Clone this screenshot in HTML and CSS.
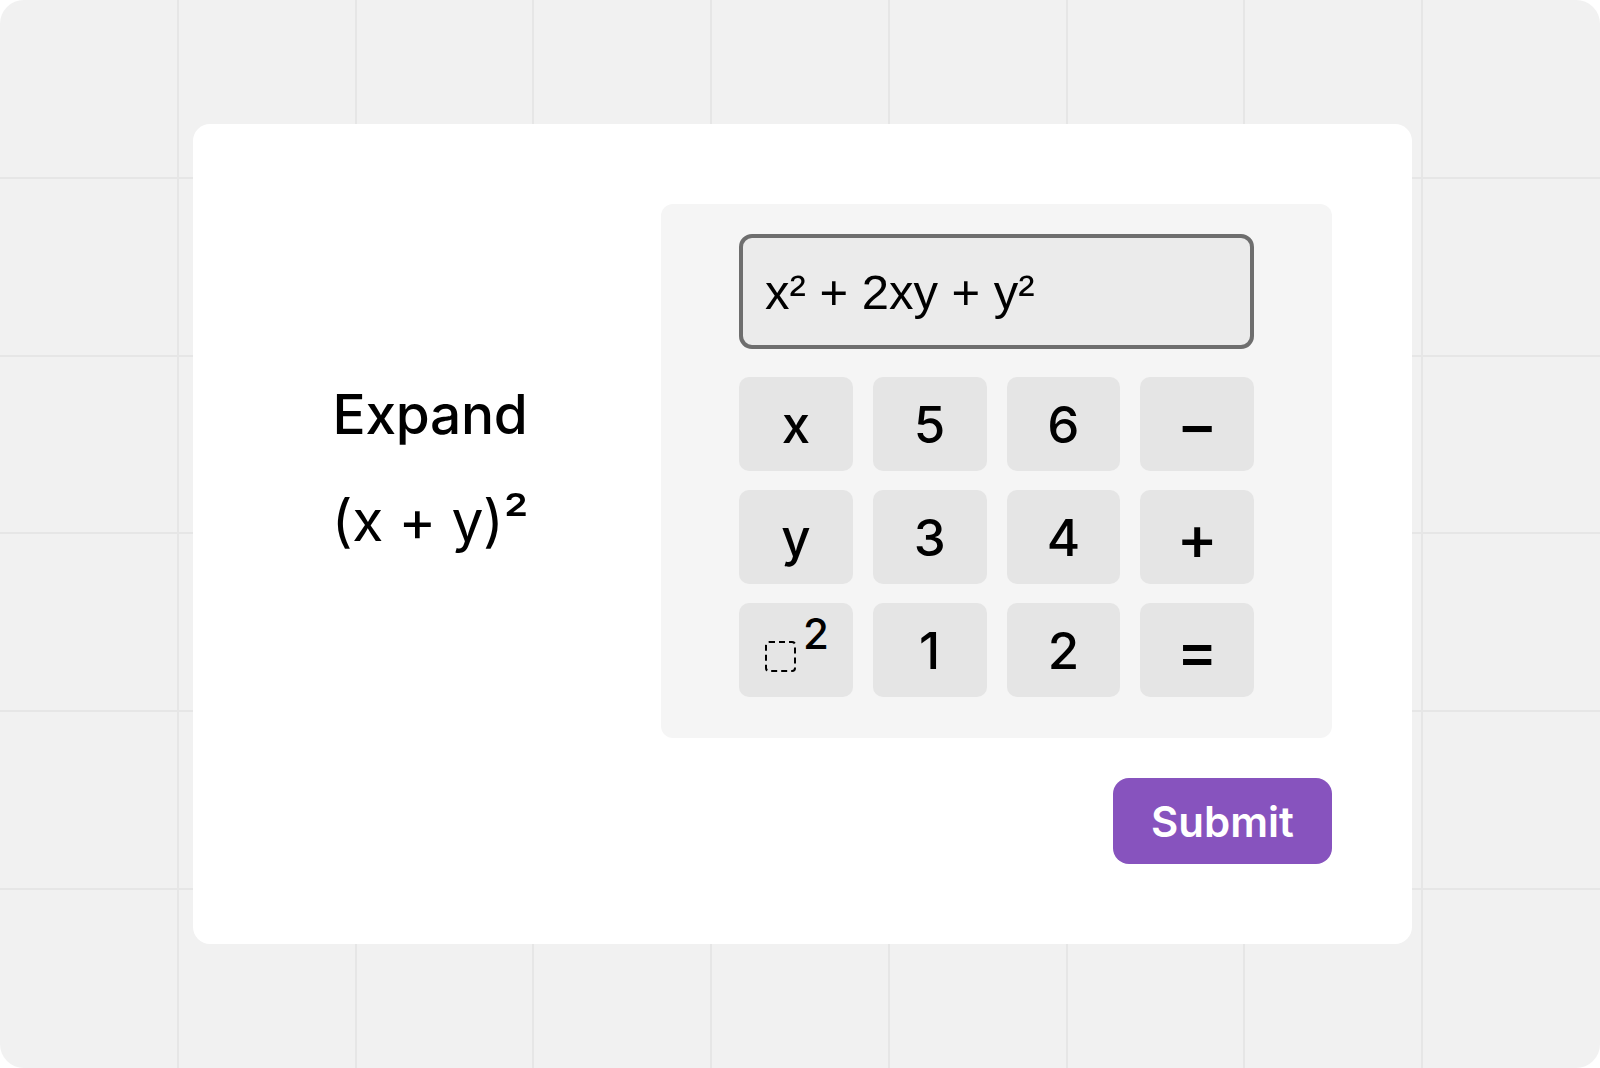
FILE: index.html
```html
<!DOCTYPE html>
<html lang="en">
<head>
<meta charset="utf-8">
<title>Expand (x + y)²</title>
<link rel="stylesheet" href="styles.css">
</head>
<body>
<div class="page">
  <div class="card">
    <div class="main">
      <div class="prompt">
        <p class="prompt-title">Expand</p>
        <p class="prompt-expr">(x + y)²</p>
      </div>
      <div class="panel">
        <div class="answer">x² + 2xy + y²</div>
        <div class="keys">
          <div class="key">x</div>
          <div class="key">5</div>
          <div class="key">6</div>
          <div class="key key-op">−</div>
          <div class="key">y</div>
          <div class="key">3</div>
          <div class="key">4</div>
          <div class="key key-op">+</div>
          <div class="key key-square"><span class="slot"></span><span class="exp">2</span></div>
          <div class="key">1</div>
          <div class="key">2</div>
          <div class="key key-op">=</div>
        </div>
      </div>
    </div>
    <div class="actions">
      <button class="submit">Submit</button>
    </div>
  </div>
</div>
</body>
</html>
```

FILE: styles.css
```css
html, body {
  margin: 0;
  padding: 0;
  background: #ffffff;
}

.page {
  width: 1600px;
  height: 1068px;
  border-radius: 24px;
  overflow: hidden;
  background-color: #f1f1f1;
  background-image:
    repeating-linear-gradient(to right, transparent 0 175.78px, #e6e6e6 175.78px 177.78px),
    repeating-linear-gradient(to bottom, transparent 0 175.78px, #e6e6e6 175.78px 177.78px);
  background-size: 1597px 100%, 100% 1062px;
  background-repeat: no-repeat, no-repeat;
  background-position: 1px 0, 0 1px;
  padding-top: 124px;
  padding-left: 193px;
  box-sizing: border-box;
}

.card {
  width: 1219px;
  height: 820px;
  box-sizing: border-box;
  padding: 80px;
  background: #ffffff;
  border-radius: 17px;
  display: flex;
  flex-direction: column;
}

.main {
  display: flex;
  align-items: center;
}

.prompt {
  width: 314px;
  margin-right: auto;
  text-align: center;
  font-family: "Inter", "Noto Sans", sans-serif;
  color: #000;
}

.prompt p {
  margin: 0;
}

.prompt-title {
  font-size: 55px;
  font-weight: 500;
  line-height: 60px;
  letter-spacing: -0.3px;
  margin-top: -4px !important;
}

.prompt-expr {
  font-size: 57px;
  font-weight: 400;
  line-height: 66px;
  letter-spacing: -0.4px;
  margin-top: 44px !important;
}

.panel {
  width: 671px;
  height: 534px;
  box-sizing: border-box;
  background: #f5f5f5;
  border-radius: 12px;
  padding: 30px 78px 41px;
  display: flex;
  flex-direction: column;
}

.answer {
  height: 115px;
  box-sizing: border-box;
  border: 4px solid #6e6e6e;
  border-radius: 13px;
  background: #ebebeb;
  padding-left: 22px;
  display: flex;
  align-items: center;
  font-family: "Liberation Sans", Arial, sans-serif;
  font-size: 49px;
  color: #000;
}

.keys {
  margin-top: 28px;
  display: grid;
  grid-template-columns: repeat(4, 1fr);
  grid-template-rows: repeat(3, 94px);
  column-gap: 20px;
  row-gap: 19px;
}

.key {
  background: #e5e5e5;
  border-radius: 10px;
  display: flex;
  align-items: center;
  justify-content: center;
  font-family: "Inter", "Noto Sans", sans-serif;
  font-size: 51px;
  font-weight: 500;
  color: #000;
}

.key-op {
  font-size: 62px;
  font-weight: 500;
}

.key-square {
  position: relative;
}

.slot {
  position: absolute;
  left: 26px;
  top: 38px;
  width: 27px;
  height: 27px;
  border: 2px dashed #000;
  border-radius: 4px;
}

.exp {
  position: absolute;
  left: 64px;
  top: 6px;
  font-size: 42px;
  line-height: 50px;
}

.actions {
  margin-top: 40px;
  display: flex;
  justify-content: flex-end;
}

.submit {
  width: 219px;
  height: 86px;
  border: none;
  border-radius: 16px;
  background: #8753be;
  color: #ffffff;
  font-family: "Inter", "Noto Sans", sans-serif;
  font-weight: 600;
  font-size: 42px;
  padding: 0;
}
```
